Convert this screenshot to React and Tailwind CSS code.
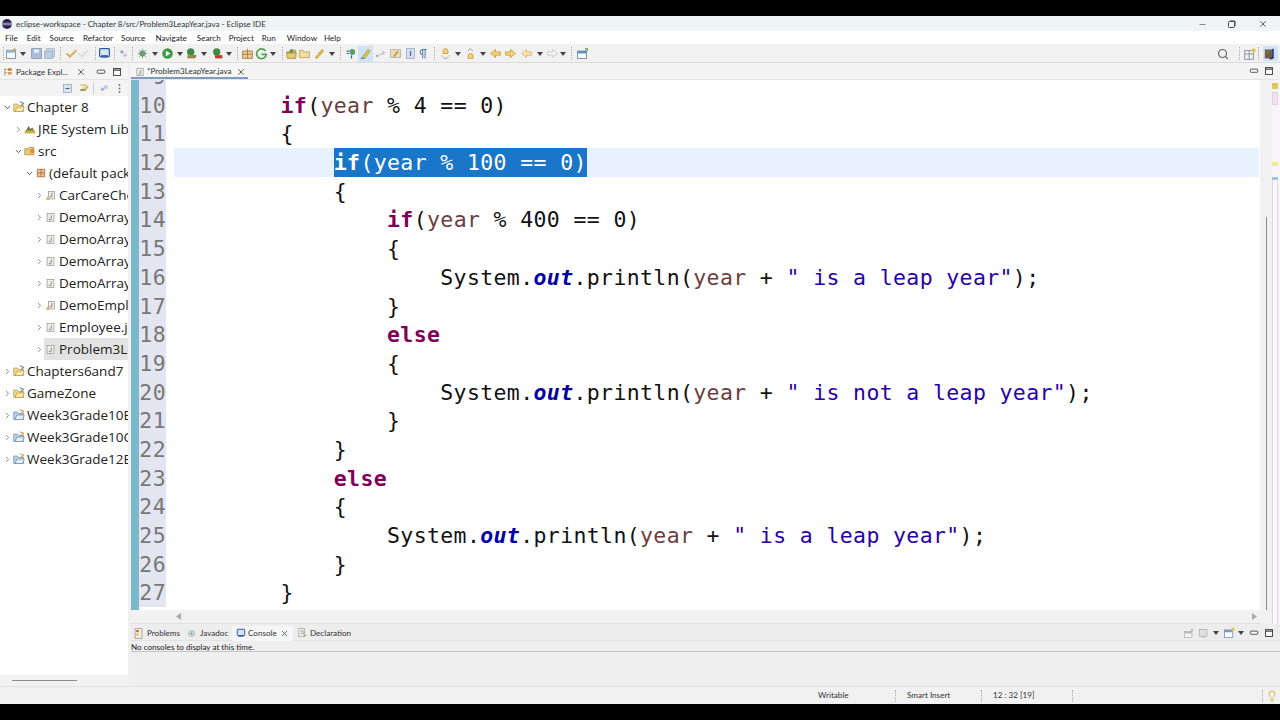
import { Search, X, Minus, ChevronRight, ChevronDown, Lightbulb } from 'lucide-react'

const ui = { fontFamily: 'Lato, "Open Sans", sans-serif' }

const K = ({ children }) => <span className="font-bold text-[#7f0055]">{children}</span>
const V = ({ children }) => <span className="text-[#6a3e3e]">{children}</span>
const F = ({ children }) => <span className="font-bold italic text-[#0000a8]">{children}</span>
const S = ({ children }) => <span className="text-[#2a00a8]">{children}</span>

const println = (msg) => (
  <>System.<F>out</F>.println(<V>year</V> + <S>{msg}</S>);</>
)

const lines = [
  [9, ''],
  [10, <><K>if</K>(<V>year</V> % 4 == 0)</>, 8],
  [11, '{', 8],
  [12, null, 12],
  [13, '{', 12],
  [14, <><K>if</K>(<V>year</V> % 400 == 0)</>, 16],
  [15, '{', 16],
  [16, println('" is a leap year"'), 20],
  [17, '}', 16],
  [18, <K>else</K>, 16],
  [19, '{', 16],
  [20, println('" is not a leap year"'), 20],
  [21, '}', 16],
  [22, '}', 12],
  [23, <K>else</K>, 12],
  [24, '{', 12],
  [25, println('" is a leap year"'), 16],
  [26, '}', 12],
  [27, '}', 8],
]

function Glyph({ t, size = 14 }) {
  const g = {
    file: <><rect x="2" y="4" width="11" height="10" fill="#fff" stroke="#5b7fa6" /><rect x="2" y="4" width="11" height="3" fill="#8fb4d8" /><path d="M12 1v5M10 3h4" stroke="#d9a520" /></>,
    save: <><rect x="2" y="2" width="12" height="12" fill="#a9bcd8" stroke="#8094b4" /><rect x="5" y="3" width="6" height="4" fill="#eef" /></>,
    saveall: <><rect x="4" y="2" width="10" height="10" fill="#ced8e6" stroke="#a8b5c8" /><rect x="2" y="5" width="10" height="9" fill="#bdcbdf" stroke="#9aaac2" /></>,
    fwd: <><path d="M2 8 8 3v3h6v4H8v3z" fill="#f2d27a" stroke="#c99a2e" /></>,
    back: <><path d="M14 8 8 3v3H2v4h6v3z" fill="#f2d27a" stroke="#c99a2e" /></>,
    backl: <><path d="M2 8 8 3v3h6v4H8v3z" fill="#f7e4b0" stroke="#d4b262" /></>,
    fwdg: <><path d="M14 8 8 3v3H2v4h6v3z" fill="#f5f5f5" stroke="#c8c8c8" /></>,
    undo: <><path d="M2 8l4 4 8-8" fill="none" stroke="#d8ae4a" strokeWidth="2.2" /></>,
    undog: <><path d="M2 8l4 4 7-8" fill="none" stroke="#dcdcdc" strokeWidth="2" /></>,
    mon: <><rect x="2" y="2" width="12" height="10" rx="1" fill="#dbe6f5" stroke="#2f5f9e" strokeWidth="1.5" /><rect x="4" y="10" width="8" height="3" fill="#2f5f9e" /></>,
    monGray: <><rect x="2" y="2" width="11" height="10" fill="#e0e0e0" stroke="#a8a8a8" /><path d="M5 13h6" stroke="#a8a8a8" /></>,
    dot: <><circle cx="6" cy="6" r="2" fill="#8fa8c4" /><circle cx="10" cy="10" r="2" fill="#b8c8d8" /></>,
    bug: <><circle cx="8" cy="8" r="3.6" fill="#5a9a63" /><path d="M2 8h12M8 2v12M3.5 3.5l9 9M12.5 3.5l-9 9" stroke="#6f9f74" /></>,
    run: <><circle cx="8" cy="8" r="6.5" fill="#3f9a48" /><path d="M6 4.5 11.5 8 6 11.5z" fill="#fff" /></>,
    cov: <><circle cx="7" cy="6" r="4.5" fill="#3f8a48" /><rect x="3" y="10" width="10" height="4" fill="#9a8a40" /><path d="M11 11h3" stroke="#333" /></>,
    ext: <><circle cx="7" cy="6" r="4.5" fill="#3f8a48" /><rect x="5" y="10" width="9" height="4" fill="#c0392b" /></>,
    box: <><path d="M2 5h12v9H2z M8 2v12 M2 9h12" fill="#e7cf9a" stroke="#a8703a" /></>,
    g: <><path d="M13 5A6 6 0 1 0 14 9H8" fill="none" stroke="#4da054" strokeWidth="2" /></>,
    pkg: <><path d="M2 6h4l1-2h6v3H2zM2 7h12l-1 7H3z" fill="#e6c877" stroke="#b08a3a" /><circle cx="8" cy="5" r="2.5" fill="#6a9a5a" /></>,
    folder: <><path d="M2 13V4h4l1 2h7v7z" fill="#f0dd9f" stroke="#c2a050" /></>,
    pen: <><path d="M3 13 11 3l2 2-8 9z" fill="#e5c24c" stroke="#b8962e" /></>,
    find: <><circle cx="9" cy="6" r="3.5" fill="#5aa060" /><path d="M2 5h3M2 8h3M8 10v4" stroke="#2d6a9f" strokeWidth="1.5" /></>,
    mark: <><path d="M3 14 11 3l3 2-7 9z" fill="#dcc35a" stroke="#a8a040" /><path d="M2 14h5" stroke="#5a8ab8" strokeWidth="1.5" /></>,
    blocks: <><circle cx="4" cy="11" r="1.4" fill="#999" /><path d="M6 10l7-3M10 5l3 2-3 2" stroke="#aaa" fill="none" /></>,
    wand: <><rect x="2" y="3" width="12" height="10" fill="#e8dcc0" stroke="#b8b0a0" /><path d="M6 12l5-7" stroke="#c09a30" strokeWidth="2" /></>,
    doc: <><rect x="3" y="2" width="10" height="12" fill="#d5dff0" stroke="#9aaac4" /><path d="M8 5v6" stroke="#4a6a9a" strokeWidth="1.5" /></>,
    pilcrow: <><path d="M7 14V3M10 14V3M6 3h6M7 3a3 3 0 0 0 0 6" fill="none" stroke="#5a7fa8" strokeWidth="1.3" /></>,
    pinDown: <><path d="M8 2a3 3 0 0 1 3 3v3H5V5a3 3 0 0 1 3-3z" fill="#f2d27a" stroke="#c99a2e" /><path d="M5 12l3 3 3-3M3 11h1M12 11h1" stroke="#888" fill="none" /></>,
    pinUp: <><path d="M8 8a3 3 0 0 1 3 3v3H5v-3a3 3 0 0 1 3-3z" fill="#f2d27a" stroke="#c99a2e" /><path d="M5 5l3-3 3 3" stroke="#888" fill="none" /></>,
    newwin: <><rect x="2" y="5" width="11" height="9" fill="#fff" stroke="#5e7f9c" /><rect x="2" y="5" width="11" height="3" fill="#5e93bd" /><path d="M10 6l4-4M11 2h3v3" stroke="#3f9a48" fill="none" /></>,
    newwinGray: <><rect x="2" y="5" width="11" height="9" fill="#f2f2f2" stroke="#aaa" /><rect x="2" y="5" width="11" height="3" fill="#bbb" /><path d="M10 6l4-4M11 2h3v3" stroke="#aaa" fill="none" /></>,
    persp: <><rect x="2" y="4" width="10" height="10" fill="#f2f2f2" stroke="#7f8b99" /><path d="M7 4v10M2 8h10" stroke="#7f8b99" /><circle cx="12" cy="4" r="2.5" fill="#e6c45a" /></>,
    viewnew: <><rect x="2" y="4" width="11" height="10" fill="#fff" stroke="#6d8ba8" /><rect x="2" y="4" width="11" height="3" fill="#6aa0cc" /><circle cx="13" cy="3" r="2.5" fill="#e6c45a" /></>,
    java: <><rect x="1" y="3" width="10" height="11" fill="#7a5a4a" /><rect x="3" y="5" width="3" height="3" fill="#3f9a48" /><rect x="6" y="9" width="3" height="3" fill="#c0392b" /><path d="M11 2v9a2 2 0 0 1-4 2" stroke="#1f3f8f" strokeWidth="2" fill="none" /></>,
    jfile: <><rect x="3" y="2" width="10" height="12" fill="#f4efdc" stroke="#8b93a3" /><path d="M9 5v5a1.5 1.5 0 0 1-3 0" stroke="#3d5f96" fill="none" /></>,
    jwarn: <><rect x="5" y="2" width="9" height="11" fill="#f4efdc" stroke="#8b93a3" /><path d="M10 4v5a1.5 1.5 0 0 1-3 0" stroke="#3d5f96" fill="none" /><path d="M1 14l3-5 3 5z" fill="#e0b040" /></>,
    proj: <><path d="M1 14V4h5l2 2h6v8z" fill="#f0d98a" stroke="#b89a4a" /><path d="M3 14l2-6h10l-2 6z" fill="#fbe9ae" stroke="#b89a4a" /><path d="M9 1l5 2-3 3" stroke="#5b8fc0" fill="none" strokeWidth="1.5" /></>,
    projb: <><path d="M1 14V4h5l2 2h6v8z" fill="#b8d0e8" stroke="#6f8fb0" /><path d="M3 14l2-6h10l-2 6z" fill="#e3eef8" stroke="#6f8fb0" /><path d="M9 1l5 2-3 3" stroke="#d0a040" fill="none" strokeWidth="1.5" /></>,
    lib: <><path d="M1 13 6 4l3 4 2-2 4 7z" fill="#6a7a3a" /><path d="M1 10h14v4H1z" fill="#d0b04a" /></>,
    srcf: <><path d="M1 13V5h5l1-2h6v10z" fill="#e6c877" stroke="#b08a3a" /><circle cx="11" cy="8" r="3" fill="#d98a3a" /></>,
    defpkg: <><path d="M3 3h10v10H3z M8 3v10 M3 8h10" fill="#e7c49a" stroke="#a8602a" /></>,
    explorer: <><path d="M3 2v12M3 4h4M3 9h4" stroke="#9a6a3a" /><rect x="8" y="2" width="6" height="4" fill="#c77b3a" /><rect x="8" y="8" width="6" height="4" fill="#d99a4a" /></>,
    collapse: <><rect x="2" y="2" width="12" height="12" fill="#dbe4ee" stroke="#8fa3b8" /><path d="M5 8h6" stroke="#45678a" strokeWidth="1.5" /></>,
    link: <><path d="M3 4h7l3 3-3 3H3M6 8h7" fill="none" stroke="#d0a840" strokeWidth="1.6" /><path d="M3 11h7" stroke="#5a8a5a" strokeWidth="1.5" /></>,
    filt: <><circle cx="5" cy="9" r="2.5" fill="#aeb8c4" /><circle cx="10" cy="6" r="3" fill="#c6ced8" /></>,
    vdots: <><circle cx="8" cy="3" r="1.4" fill="#777" /><circle cx="8" cy="8" r="1.4" fill="#777" /><circle cx="8" cy="13" r="1.4" fill="#777" /></>,
    min: <><rect x="2" y="5" width="12" height="5" rx="1" fill="#fff" stroke="#555" strokeWidth="1.6" /></>,
    max: <><rect x="2.5" y="2.5" width="11" height="11" fill="#fff" stroke="#444" strokeWidth="1.6" /><path d="M2 5h12" stroke="#444" strokeWidth="2" /></>,
    problems: <><rect x="3" y="1" width="10" height="14" fill="#f4eee0" stroke="#8a8a8a" /><rect x="5" y="3" width="3" height="3" fill="#c0392b" /><rect x="5" y="8" width="3" height="3" fill="#e0b040" /></>,
    at: <><circle cx="8" cy="8" r="5" fill="none" stroke="#7f9fb0" strokeWidth="1.5" /><circle cx="8" cy="8" r="2" fill="#5f8f9f" /></>,
    console: <><rect x="2" y="2" width="12" height="10" rx="1" fill="#d5e3f2" stroke="#2f5f9e" strokeWidth="1.6" /><rect x="4" y="12" width="8" height="2" fill="#2f5f9e" /></>,
    decl: <><rect x="3" y="1" width="9" height="13" fill="#f4f2e0" stroke="#8a9aa0" /><path d="M6 6a2 2 0 0 1 4 0v3M6 9h4" stroke="#5a7a9a" fill="none" /><path d="M10 12h5" stroke="#d0a040" strokeWidth="2" /></>,
  }
  return <svg width={size} height={size} viewBox="0 0 16 16" className="shrink-0">{g[t]}</svg>
}

const Caret = () => <svg width="6" height="4" viewBox="0 0 6 4" className="shrink-0"><path d="M0 0h6L3 4z" fill="#444" /></svg>
const Sep = () => <div className="h-[13px] border-l border-dotted border-[#aaa]" />

// [glyph, center x in the window]
const toolbar = [
  ['s', 3], ['file', 10], ['c', 23], ['save', 36], ['saveall', 51], ['s', 61], ['undo', 70], ['undog', 84], ['s', 96],
  ['mon', 104], ['s', 115], ['dot', 123], ['s', 133], ['bug', 142], ['c', 154], ['run', 168], ['c', 179], ['cov', 192], ['c', 204], ['ext', 217], ['c', 231],
  ['s', 237], ['box', 246], ['g', 262], ['c', 274], ['s', 282], ['pkg', 290], ['folder', 304], ['pen', 320], ['c', 333], ['s', 340], ['find', 349],
  ['mark', 366], ['blocks', 380], ['wand', 396], ['doc', 410], ['pilcrow', 425], ['s', 435], ['pinDown', 444], ['c', 458], ['pinUp', 470], ['c', 483],
  ['fwd', 495], ['back', 510], ['backl', 527], ['c', 540], ['fwdg', 552], ['c', 564], ['s', 571], ['newwin', 581],
]

function Toolbar() {
  return (
    <div className="flex items-center h-[19px] bg-[#f1f1f1] border-b border-[#dcdcdc] pt-[1px]">
      {toolbar.map(([t, c], i) => {
        const prev = i ? (toolbar[i - 1][1] + c) / 2 : 0
        const next = i < toolbar.length - 1 ? (c + toolbar[i + 1][1]) / 2 : c + 8
        return (
          <div key={i} style={{ width: next - prev }} className="flex items-center justify-center shrink-0">
            {t === 's' ? <Sep /> : t === 'c' ? <Caret /> : t === 'mark' ? (
              <div className="flex items-center justify-center w-[15px] h-[16px] bg-[#cfe3f5] shrink-0"><Glyph t={t} size={13} /></div>
            ) : <Glyph t={t} size={13} />}
          </div>
        )
      })}
      <div className="flex-1" />
      <Search size={12} className="text-[#666] mr-[10px]" strokeWidth={2.4} />
      <Sep />
      <div className="ml-[3px] mr-[1px]"><Glyph t="persp" size={14} /></div>
      <Sep />
      <div className="flex items-center justify-center w-[15px] h-[15px] ml-[4px] mr-[2px] bg-[#cfe3f5]"><Glyph t="java" size={13} /></div>
    </div>
  )
}

const menus = [
  ['File', 'mr-[9px]'], ['Edit', 'mr-[9px]'], ['Source', 'mr-[9px]'], ['Refactor', 'mr-[8px]'], ['Source', 'mr-[10px]'],
  ['Navigate', 'mr-[10px]'], ['Search', 'mr-[8px]'], ['Project', 'mr-[8px]'], ['Run', 'mr-[11px]'], ['Window', 'mr-[7px]'], ['Help', ''],
]

const tree = [
  [0, 'd', 'proj', 'Chapter 8'],
  [1, 'r', 'lib', 'JRE System Library'],
  [1, 'd', 'srcf', 'src'],
  [2, 'd', 'defpkg', '(default package)'],
  [3, 'r', 'jwarn', 'CarCareChoice.java'],
  [3, 'r', 'jfile', 'DemoArray.java'],
  [3, 'r', 'jfile', 'DemoArray2.java'],
  [3, 'r', 'jfile', 'DemoArray3.java'],
  [3, 'r', 'jfile', 'DemoArray4.java'],
  [3, 'r', 'jwarn', 'DemoEmployee.java'],
  [3, 'r', 'jfile', 'Employee.java'],
  [3, 'r', 'jfile', 'Problem3LeapYear.java', true],
  [0, 'r', 'proj', 'Chapters6and7'],
  [0, 'r', 'proj', 'GameZone'],
  [0, 'r', 'projb', 'Week3Grade10B'],
  [0, 'r', 'projb', 'Week3Grade10G'],
  [0, 'r', 'projb', 'Week3Grade12B'],
]

const indents = ['pl-[3px]', 'pl-[14px]', 'pl-[25px]', 'pl-[35px]']
const treeFont = { fontFamily: '"Open Sans", sans-serif' }

function LeftPanel() {
  return (
    <div className="w-[128px] shrink-0 flex flex-col bg-white overflow-hidden">
      <div className="flex items-center h-[17px] pt-[2px] bg-[#f4f4f4] border-b border-[#e4e4e4] shrink-0">
        <div className="ml-[3px]"><Glyph t="explorer" size={10} /></div>
        <span className="ml-[3px] w-[52px] text-[8.1px] text-[#333] whitespace-nowrap">Package Expl...</span>
        <X size={10} className="ml-[8px] text-[#444] shrink-0" />
        <div className="ml-[10px]"><Glyph t="min" size={10} /></div>
        <div className="ml-[6px]"><Glyph t="max" size={10} /></div>
      </div>
      <div className="flex items-center h-[16px] pl-[62px] bg-[#f4f4f4] shrink-0">
        <Glyph t="collapse" size={11} />
        <div className="ml-[5px]"><Glyph t="link" size={12} /></div>
        <div className="h-[11px] border-l border-[#ccc] ml-[3px]" />
        <div className="ml-[5px]"><Glyph t="filt" size={11} /></div>
        <div className="ml-[4px]"><Glyph t="vdots" size={11} /></div>
      </div>
      <div className="flex-1 overflow-hidden" style={treeFont}>
        {tree.map(([lvl, arrow, icon, name, sel], i) => (
          <div key={i} className={`flex items-center h-[22px] whitespace-nowrap ${indents[lvl]}`}>
            {arrow === 'd'
              ? <ChevronDown size={9} strokeWidth={2.2} className="text-[#333] shrink-0" />
              : <ChevronRight size={9} strokeWidth={2.2} className="text-[#777] shrink-0" />}
            {sel ? (
              <div className="flex items-center h-[22px] bg-[#e2e2e2] pl-[1px] flex-1 overflow-hidden">
                <Glyph t={icon} size={11} />
                <span className="ml-[3px] text-[13.5px] text-[#222]">{name}</span>
              </div>
            ) : (
              <>
                <div className="ml-[1px]"><Glyph t={icon} size={lvl < 3 ? 12 : 11} /></div>
                <span className={`text-[13.5px] text-[#222] ${lvl < 3 ? 'ml-[2px]' : 'ml-[3px]'}`}>{name}</span>
              </>
            )}
          </div>
        ))}
      </div>
      <div className="h-[11px] bg-[#f1f1f1] shrink-0 flex items-center pl-[12px]">
        <div className="h-[1px] w-[65px] bg-[#8a8a8a]" />
      </div>
    </div>
  )
}

function Editor() {
  return (
    <div className="flex-1 flex flex-col min-w-0">
      <div className="flex items-stretch h-[17px] bg-[#f4f4f4] border-b border-[#e4e4e4] shrink-0">
        <div className="flex items-center w-[117px] bg-[#f6f6f6] border-b-2 border-[#7c9cc4] pl-[4px] pt-[3px]">
          <Glyph t="jfile" size={10} />
          <span className="ml-[2px] w-[85px] text-[8.1px] text-[#333] whitespace-nowrap">*Problem3LeapYear.java</span>
          <X size={10} className="ml-[4px] text-[#444] shrink-0" />
        </div>
        <div className="flex-1" />
        <div className="flex items-center gap-[5px] pr-[6px]">
          <Glyph t="min" size={10} />
          <Glyph t="max" size={10} />
        </div>
      </div>
      <div className="flex flex-1 min-h-0">
        <div className="flex-1 flex flex-col min-w-0">
          <div className="flex-1 overflow-hidden bg-white flex">
            <div className="w-[8px] bg-[#7ab8cc] shrink-0" />
            <div className="flex-1 -mt-[18px] min-w-0">
              {lines.map(([n, code, indent]) => (
                <div key={n} className="flex h-[28.7px] leading-[28.7px] text-[21.5px] tracking-[0.37px] whitespace-pre" style={{ fontFamily: '"DejaVu Sans Mono", monospace' }}>
                  <div className="w-[27px] shrink-0 bg-[#e3e6f0] text-[#787878] text-right overflow-hidden pt-[1px]">{n}</div>
                  <div className="w-[8px] shrink-0" />
                  {n === 12 ? (
                    <div className="flex-1 bg-[#e8f2fe] text-white mr-[1px]"><span className="text-transparent">{' '.repeat(indent)}</span><span className="bg-[#1a76c9] inline-block h-[28.7px] pt-[1px] align-top"><b>if</b>(year % 100 == 0)</span></div>
                  ) : (
                    <div className="flex-1 text-[#111] pt-[1px]">{' '.repeat(indent || 0)}{code}</div>
                  )}
                </div>
              ))}
            </div>
          </div>
          <div className="h-[14px] bg-[#f1f1f1] border-b border-[#e0e0e0] flex items-center justify-between pl-[45px] pr-[3px] shrink-0">
            <svg width="5" height="7" viewBox="0 0 5 7"><path d="M5 0v7L0 3.5z" fill="#aaa" /></svg>
            <svg width="5" height="7" viewBox="0 0 5 7"><path d="M0 0v7l5-3.5z" fill="#aaa" /></svg>
          </div>
        </div>
        <div className="w-[12px] bg-[#f1f1f1] flex justify-center shrink-0 pt-[137px]">
          <div className="w-[1px] h-[393px] bg-[#8a8a8a]" />
        </div>
        <div className="w-[8px] bg-[#f8f4f8] shrink-0 flex flex-col items-stretch pt-[3px] pr-[2px]">
          <div className="h-[6px] bg-[#e0c560]" />
          <div className="h-[13px] mt-[3px] bg-[#efe4ef] border border-[#e0d4e4]" />
          <div className="h-[4px] mt-[57px] bg-[#f2e89c]" />
          <div className="h-[3px] mt-[11px] bg-[#9cc4e4]" />
          <div className="flex-1 bg-[#fbf7fb] border-x border-[#e0d4e4]" />
        </div>
      </div>
    </div>
  )
}

function BottomPanel() {
  return (
    <div className="h-[62px] shrink-0 flex flex-col bg-[#efefef]">
      <div className="flex items-center h-[17px] pt-[2px] bg-[#ededed] border-b border-[#e2e2e2] text-[8.1px] text-[#333] whitespace-nowrap shrink-0">
        <div className="ml-[2px]"><Glyph t="problems" size={11} /></div>
        <span className="ml-[3px] w-[34px]">Problems</span>
        <div className="ml-[6px]"><Glyph t="at" size={9} /></div>
        <span className="ml-[4px] w-[28px]">Javadoc</span>
        <div className="ml-[4px] flex items-center h-[15px] w-[61px] bg-[#f6f6f6] pl-[4px]">
          <Glyph t="console" size={10} />
          <span className="ml-[2px] w-[28px]">Console</span>
          <X size={9} className="ml-[4px] text-[#444] shrink-0" />
        </div>
        <div className="ml-[4px]"><Glyph t="decl" size={10} /></div>
        <span className="ml-[3px]">Declaration</span>
        <div className="flex-1" />
        <div className="flex items-center pr-[6px]">
          <Glyph t="newwinGray" size={11} />
          <div className="ml-[4px]"><Glyph t="monGray" size={11} /></div>
          <div className="ml-[4px] flex"><Caret /></div>
          <div className="ml-[4px]"><Glyph t="viewnew" size={12} /></div>
          <div className="ml-[3px] flex"><Caret /></div>
          <div className="ml-[5px]"><Glyph t="min" size={10} /></div>
          <div className="ml-[5px]"><Glyph t="max" size={10} /></div>
        </div>
      </div>
      <div className="h-[11px] leading-[12px] text-[8.1px] text-[#222] border-b border-[#c4c4c4] shrink-0">No consoles to display at this time.</div>
      <div className="flex-1" />
    </div>
  )
}

function Dots() {
  return <div className="h-[12px] border-l border-dotted border-[#aaa]" />
}

export default function App() {
  return (
    <div className="w-[1280px] h-[720px] bg-black overflow-hidden pt-[16px] pb-[16px]" style={ui}>
      <div className="h-[688px] flex flex-col bg-[#f0f0f0]">
        {/* title bar */}
        <div className="flex items-center h-[15px] pt-[1px] bg-[#eff4f4] shrink-0">
          <svg width="10" height="10" viewBox="0 0 10 10" className="ml-[2px]">
            <circle cx="5" cy="5" r="5" fill="#2c2255" />
            <path d="M0 4.2h10M0 5.8h10" stroke="#e8e8f0" strokeWidth="0.7" />
          </svg>
          <span className="ml-[4px] text-[8px] text-[#333] whitespace-nowrap">eclipse-workspace - Chapter 8/src/Problem3LeapYear.java - Eclipse IDE</span>
          <div className="flex-1" />
          <Minus size={9} className="text-[#666]" />
          <svg width="8" height="8" viewBox="0 0 8 8" className="ml-[21px]"><rect x="0.5" y="1.5" width="6" height="6" rx="1" fill="none" stroke="#444" /><path d="M2 1h5v5" fill="none" stroke="#444" /></svg>
          <X size={10} className="ml-[22px] mr-[12px] text-[#444]" />
        </div>
        {/* menu bar */}
        <div className="flex items-center h-[13px] pt-[1px] bg-white pl-[5px] text-[8.1px] text-[#222] shrink-0">
          {menus.map(([m, c], i) => <span key={i} className={c}>{m}</span>)}
        </div>
        <Toolbar />
        {/* workbench */}
        <div className="flex flex-1 min-h-0">
          <LeftPanel />
          <div className="w-[3px] shrink-0" />
          <div className="flex-1 flex flex-col min-w-0">
            <Editor />
            <BottomPanel />
          </div>
        </div>
        {/* status bar */}
        <div className="flex items-center h-[18px] bg-[#f1f1f1] border-t border-[#e2e2e2] text-[8.1px] text-[#333] shrink-0 whitespace-nowrap pl-[818px]">
          <span className="w-[77px]">Writable</span>
          <Dots />
          <span className="w-[85px] pl-[11px]">Smart Insert</span>
          <Dots />
          <span className="w-[90px] pl-[11px]">12 : 32 [19]</span>
          <Dots />
          <div className="flex-1" />
          <Dots />
          <Lightbulb size={12} className="ml-[3px] mr-[2px] text-[#dcb43c]" />
        </div>
      </div>
    </div>
  )
}
